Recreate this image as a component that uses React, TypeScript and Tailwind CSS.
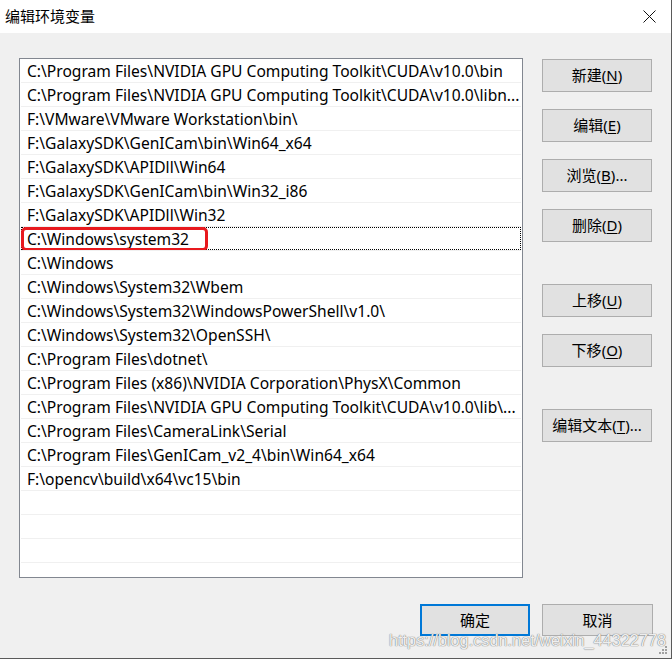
import React from "react";

const paths = [
  "C:\\Program Files\\NVIDIA GPU Computing Toolkit\\CUDA\\v10.0\\bin",
  "C:\\Program Files\\NVIDIA GPU Computing Toolkit\\CUDA\\v10.0\\libn...",
  "F:\\VMware\\VMware Workstation\\bin\\",
  "F:\\GalaxySDK\\GenICam\\bin\\Win64_x64",
  "F:\\GalaxySDK\\APIDll\\Win64",
  "F:\\GalaxySDK\\GenICam\\bin\\Win32_i86",
  "F:\\GalaxySDK\\APIDll\\Win32",
  "C:\\Windows\\system32",
  "C:\\Windows",
  "C:\\Windows\\System32\\Wbem",
  "C:\\Windows\\System32\\WindowsPowerShell\\v1.0\\",
  "C:\\Windows\\System32\\OpenSSH\\",
  "C:\\Program Files\\dotnet\\",
  "C:\\Program Files (x86)\\NVIDIA Corporation\\PhysX\\Common",
  "C:\\Program Files\\NVIDIA GPU Computing Toolkit\\CUDA\\v10.0\\lib\\...",
  "C:\\Program Files\\CameraLink\\Serial",
  "C:\\Program Files\\GenICam_v2_4\\bin\\Win64_x64",
  "F:\\opencv\\build\\x64\\vc15\\bin",
];

const SELECTED = 7;

function SideButton({ label, hotkey, suffix = "", className = "" }: { label: string; hotkey: string; suffix?: string; className?: string }) {
  return (
    <button
      className={`w-[110px] h-[33px] bg-[#e1e1e1] border border-[#adadad] text-[15px] text-black flex items-center justify-center ${className}`}
    >
      {label}(<span className="underline underline-offset-2">{hotkey}</span>){suffix}
    </button>
  );
}

export default function App() {
  const rows = [...paths, ...Array(5).fill("")];

  return (
    <div
      className="relative w-[672px] h-[659px] bg-[#f0f0f0] border-r border-b border-[#5a5a5a] flex flex-col overflow-hidden text-black"
      style={{ fontFamily: "'Noto Sans', 'Noto Sans CJK SC', sans-serif" }}
    >
      {/* Title bar */}
      <div className="h-[33px] shrink-0 bg-white flex items-center justify-between pl-[5px] pr-[15px]">
        <span className="text-[15px] leading-none">编辑环境变量</span>
        <svg width="13" height="13" viewBox="0 0 13 13" fill="none" stroke="#111" strokeWidth="1">
          <path d="M0.5 0.5 L12.5 12.5 M12.5 0.5 L0.5 12.5" />
        </svg>
      </div>

      <div className="flex pt-[25px] pl-[19px]">
        {/* List box */}
        <div className="w-[504px] h-[520px] border border-[#828790] bg-white px-px overflow-hidden">
          {rows.map((p, i) => (
            <div
              key={i}
              className="relative h-[24px] border-b border-[#f0f0f0] pl-[6px] pt-[2px] flex items-center text-[15.6px] whitespace-nowrap overflow-hidden"
            >
              {p}
              {i === SELECTED && (
                <>
                  <div className="absolute inset-0 border border-dotted border-black" />
                  <div className="absolute left-0 top-0 w-[187px] h-[24px] border-[3px] border-[#e8191e] rounded-[5px]" />
                </>
              )}
            </div>
          ))}
        </div>

        {/* Buttons */}
        <div className="ml-[19px] pt-px flex flex-col">
          <SideButton label="新建" hotkey="N" />
          <SideButton label="编辑" hotkey="E" className="mt-[17px]" />
          <SideButton label="浏览" hotkey="B" suffix="..." className="mt-[17px]" />
          <SideButton label="删除" hotkey="D" className="mt-[17px]" />
          <SideButton label="上移" hotkey="U" className="mt-[42px]" />
          <SideButton label="下移" hotkey="O" className="mt-[17px]" />
          <SideButton label="编辑文本" hotkey="T" suffix="..." className="mt-[42px]" />
        </div>
      </div>

      {/* Dialog buttons */}
      <div className="flex justify-end gap-[12px] pr-[18px] mt-[26px]">
        <button className="w-[110px] h-[32px] bg-[#e1e1e1] border-2 border-[#0078d7] text-[15px]">确定</button>
        <button className="w-[111px] h-[32px] bg-[#e1e1e1] border border-[#adadad] text-[15px]">取消</button>
      </div>

      {/* Watermark */}
      <div
        className="absolute right-[5px] bottom-[10px] text-[16.3px] leading-none text-[#ffffffe6] [text-shadow:0_0_1px_#7a7a7a,0_0_1px_#7a7a7a]"
        style={{ fontFamily: "'Liberation Sans', sans-serif" }}
      >
        https://blog.csdn.net/weixin_44322778
      </div>

      {/* Resize grip */}
      <svg className="absolute right-[3px] bottom-[3px]" width="10" height="10" viewBox="0 0 10 10" fill="#a0a0a0">
        <rect x="7" y="1" width="2" height="2" />
        <rect x="4" y="4" width="2" height="2" />
        <rect x="7" y="4" width="2" height="2" />
        <rect x="1" y="7" width="2" height="2" />
        <rect x="4" y="7" width="2" height="2" />
        <rect x="7" y="7" width="2" height="2" />
      </svg>
    </div>
  );
}
